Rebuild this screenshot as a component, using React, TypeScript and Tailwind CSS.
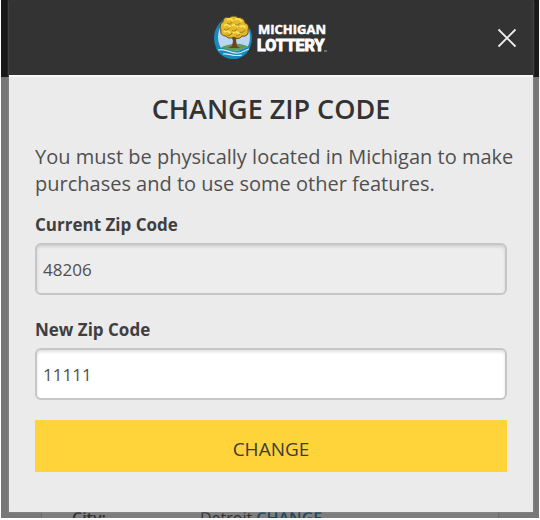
import type { ComponentProps } from 'react';

interface ZipFieldProps extends ComponentProps<'input'> {
  id: string;
  label: string;
}

function ZipField({ id, label, ...props }: ZipFieldProps) {
  return (
    <div className="flex flex-col gap-1.5">
      <label htmlFor={id} className="text-[17px] leading-6 font-bold text-[#3f3f3f]">
        {label}
      </label>
      <input
        id={id}
        type="text"
        inputMode="numeric"
        className="h-13 w-full rounded-md border-2 border-[#c6c6c6] bg-white px-1.5 text-[17px] text-[#505050] shadow-[inset_0_2px_3px_rgba(0,0,0,0.12)] read-only:bg-[#ededed] focus:outline-none"
        {...props}
      />
    </div>
  );
}

function Logo() {
  return (
    <svg width="116" height="46" viewBox="0 0 116 46" role="img" aria-label="Michigan Lottery">
      <ellipse cx="20" cy="23" rx="19" ry="21" fill="#1689bd" />
      <ellipse cx="21" cy="22" rx="16" ry="19" fill="#bcd5f2" />
      <path d="M6 34c5-4 9-4 14-5 6-1 12 1 16 3-6 1-9 4-15 4S9 34 6 34z" fill="#5f9a5c" />
      <path d="M3 33c8-1 14 4 21 3 5-1 8-4 13-4-2 6-7 11-15 12C13 44 6 40 3 33z" fill="#1689bd" />
      <path d="M5 35c8-2 13 4 20 3 4 0 7-3 11-4M10 39c6-1 10 3 19 1" fill="none" stroke="#d3e9f6" strokeWidth="1.2" />
      <path d="M18 20l2 6-1 5-4 2h12l-3-2-1-6 3-7z" fill="#70431d" />
      <path
        d="M16 3c3-3 8-2 9 0 4-1 7 2 7 5 4 1 4 5 3 7 1 4-2 7-6 6-2 3-6 3-8 1-3 2-7 1-8-1-4 0-6-3-5-6-2-4 0-7 2-8 0-4 3-6 6-4z"
        fill="#e4b929"
        stroke="#584914"
      />
      <path
        d="M14 5c2-2 5-1 6 1M22 5c2-2 6-1 6 2M11 11c2-2 5-2 6 1M19 11c2-2 5-1 6 1M27 12c2-2 5-1 5 1M11 17c2-2 5-1 6 1M20 18c2-2 5-1 6 1"
        fill="none"
        stroke="#f9e05c"
        strokeWidth="2"
      />
      <path
        d="M14 8c2 2 4 1 5-1M22 9c2 2 4 1 5-1M11 14c2 2 4 1 5-1M19 15c2 2 4 1 5-1M27 17c2 1 4 0 5-2M14 20c2 1 4 0 5-2M23 21c2 0 3-1 4-2"
        fill="none"
        stroke="#927326"
      />
      <g fill="#fff" stroke="#fff" className="font-bold">
        <text x="45" y="19" fontSize="13" strokeWidth="0.5" className="font-['Open_Sans',sans-serif]">
          MICHIGAN
        </text>
        <text x="44" y="36" fontSize="16" strokeWidth="1" className="font-['Roboto',sans-serif]">
          LOTTERY
        </text>
      </g>
      <path d="M111 36h3" stroke="#a8a8a8" />
    </svg>
  );
}

function AccountPage() {
  return (
    <div className="absolute inset-0 flex flex-col overflow-hidden bg-[#777]" aria-hidden="true">
      <div className="h-[77px] shrink-0 bg-[#191919]" />
      <div className="mx-10 flex flex-1 flex-col justify-end border-x border-[#6a6a6a] bg-[#7d7d7d]">
        <div className="flex h-2.5 px-[30px] text-base leading-5">
          <span className="w-32 font-semibold text-[#303030]">City:</span>
          <span className="text-[#303030]">
            Detroit{' '}
            <a href="#zip" tabIndex={-1} className="font-semibold text-[#17475c]">
              CHANGE
            </a>
          </span>
        </div>
      </div>
    </div>
  );
}

export default function App() {
  return (
    <div className="bg-white px-px pb-0.5 font-['Open_Sans',sans-serif]">
      <div className="relative pr-1.5 pb-1.5 pl-2">
        <AccountPage />
        <div
          id="zip"
          role="dialog"
          aria-modal="true"
          aria-labelledby="zip-title"
          className="relative bg-[#ebebeb] shadow-[0_0_2px_#999]"
        >
          <header className="grid h-[75px] grid-cols-[1fr_auto_1fr] items-center bg-[#333]">
            <span />
            <Logo />
            <button type="button" aria-label="Close" className="mr-3.5 cursor-pointer justify-self-end p-0.5">
              <svg width="20" height="20" viewBox="0 0 20 20" fill="none" stroke="#eee" strokeWidth="1.8">
                <path d="M1.5 1.5l17 17M18.5 1.5l-17 17" />
              </svg>
            </button>
          </header>
          <form
            className="flex flex-col border-t-2 border-[#f8f8f8] px-[26px] pt-3 pb-10"
            onSubmit={e => e.preventDefault()}
          >
            <h1 id="zip-title" className="text-center text-[27px] leading-10 font-semibold text-[#333]">
              CHANGE ZIP CODE
            </h1>
            <p className="mt-3.5 -mr-3 text-[20px] leading-[27px] text-[#505050]">
              You must be physically located in Michigan to make purchases and to use some other features.
            </p>
            <div className="mt-4 flex flex-col gap-[23px]">
              <ZipField id="current-zip" label="Current Zip Code" defaultValue="48206" readOnly />
              <ZipField id="new-zip" label="New Zip Code" defaultValue="11111" />
            </div>
            <button
              type="submit"
              className="mt-5 h-13 w-full cursor-pointer bg-[#ffd43a] pt-1.5 text-[19px] text-[#3c3c3c]"
            >
              CHANGE
            </button>
          </form>
        </div>
      </div>
    </div>
  );
}
